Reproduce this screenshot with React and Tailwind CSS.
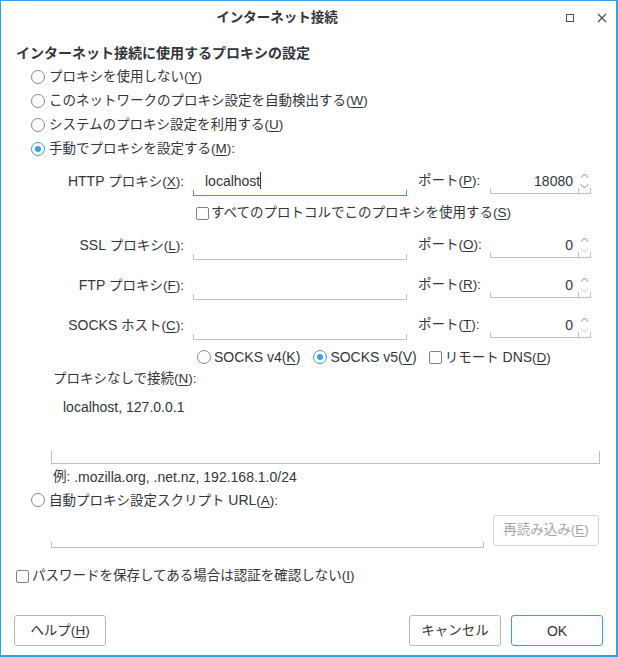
import React from "react";

const U = ({ children }) => (
  <span className="underline decoration-1 underline-offset-[2px]">{children}</span>
);

const Radio = ({ checked }) =>
  checked ? (
    <span className="w-[14px] h-[14px] rounded-full border-[1.5px] border-[#2ba4ec] flex items-center justify-center shrink-0 bg-white">
      <span className="w-[6px] h-[6px] rounded-full bg-[#2ba4ec]" />
    </span>
  ) : (
    <span className="block w-[14px] h-[14px] rounded-full border border-[#83888b] shrink-0 bg-white" />
  );

const Check = () => (
  <span className="block w-[13px] h-[13px] rounded-[2px] border border-[#7d8285] shrink-0 bg-white" />
);

const Field = ({ className, focused, tall, children }) => (
  <div
    className={
      "relative border-b flex items-center " +
      (focused ? "border-[#2ba4ec] " : "border-[#bcbec0] ") +
      className
    }
  >
    <span
      className={
        "absolute left-0 bottom-0 w-px " +
        (tall ? "h-[12px] " : "h-[5px] ") +
        (focused ? "bg-[#2ba4ec]" : "bg-[#bcbec0]")
      }
    />
    <span
      className={
        "absolute right-0 bottom-0 w-px " +
        (tall ? "h-[12px] " : "h-[5px] ") +
        (focused ? "bg-[#2ba4ec]" : "bg-[#bcbec0]")
      }
    />
    {children}
  </div>
);

const Chevron = ({ up, light }) => (
  <svg width="9" height="5" viewBox="0 0 9 5" className="block">
    <polyline
      points={up ? "1,4.5 4.5,1 8,4.5" : "1,0.5 4.5,4 8,0.5"}
      fill="none"
      stroke={light ? "#c4c6c8" : "#7a7f82"}
      strokeWidth="1"
    />
  </svg>
);

const Spin = ({ value, downLight }) => (
  <div className="relative w-[101px] h-[26px] border-b border-[#bcbec0] flex items-center">
    <span className="absolute left-0 bottom-0 w-px h-[5px] bg-[#bcbec0]" />
    <span className="flex-1 text-right pr-[5px] text-[14px]">{value}</span>
    <div className="relative w-[13px] h-full flex flex-col items-center pt-[5px] gap-[6px]">
      <span className="absolute left-0 bottom-0 w-px h-[5px] bg-[#bcbec0]" />
      <span className="absolute right-0 bottom-0 w-px h-[5px] bg-[#bcbec0]" />
      <Chevron up />
      <Chevron light={downLight} />
    </div>
  </div>
);

const ProxyRow = ({ label, port, portValue, focused, downLight, children }) => (
  <div className="h-[40px] flex items-center">
    <div className="w-[168px] text-right">{label}</div>
    <Field className="ml-[9px] w-[214px] h-[30px]" focused={focused}>
      {children}
    </Field>
    <div className="ml-[11px] w-[72px]">{port}</div>
    <Spin value={portValue} downLight={downLight} />
  </div>
);

const L = ({ children }) => <span className="text-[14px]">{children}</span>;

export default function App() {
  return (
    <div className="w-[618px] h-[657px] bg-white border-t border-l border-r-2 border-b-2 border-[#2ba4ec] flex flex-col text-[#31363b] text-[13.5px] leading-none font-['Liberation_Sans','Noto_Sans_CJK_JP',sans-serif] overflow-hidden">
      {/* Title bar */}
      <div className="h-[34px] flex items-center shrink-0">
        <div className="w-[552px] text-center font-bold">インターネット接続</div>
        <div className="ml-[13px] w-[8px] h-[8px] border-[1.5px] border-[#4d4d4d] -mt-[1px]" />
        <svg width="10" height="10" viewBox="0 0 10 10" className="ml-[23px] -mt-[1px]">
          <path d="M1 1 L9 9 M9 1 L1 9" stroke="#4d4d4d" strokeWidth="1.2" />
        </svg>
      </div>

      <div className="pl-[15px] flex flex-col">
        <div className="mt-[6px] h-[24px] flex items-center font-bold text-[14px]">
          インターネット接続に使用するプロキシの設定
        </div>

        {[
          ["プロキシを使用しない(", "Y", ")", false],
          ["このネットワークのプロキシ設定を自動検出する(", "W", ")", false],
          ["システムのプロキシ設定を利用する(", "U", ")", false],
          ["手動でプロキシを設定する(", "M", "):", true],
        ].map(([a, k, b, c]) => (
          <div key={k} className="h-[24px] flex items-center gap-[4px] ml-[15px]">
            <Radio checked={c} />
            <span>
              {a}
              <U>{k}</U>
              {b}
            </span>
          </div>
        ))}

        <ProxyRow
          label={<><L>HTTP</L> プロキシ(<U>X</U>):</>}
          port={<>ポート(<U>P</U>):</>}
          portValue="18080"
          focused
        >
          <span className="pl-[12px] text-[14px]">localhost</span>
          <span className="w-px h-[17px] bg-[#31363b]" />
        </ProxyRow>

        <div className="h-[24px] flex items-center gap-[2px] ml-[180px]">
          <Check />
          <span>
            すべてのプロトコルでこのプロキシを使用する(<U>S</U>)
          </span>
        </div>

        <ProxyRow
          label={<><L>SSL</L> プロキシ(<U>L</U>):</>}
          port={<>ポート(<U>O</U>):</>}
          portValue="0"
          downLight
        />
        <ProxyRow
          label={<><L>FTP</L> プロキシ(<U>F</U>):</>}
          port={<>ポート(<U>R</U>):</>}
          portValue="0"
          downLight
        />
        <ProxyRow
          label={<><L>SOCKS</L> ホスト(<U>C</U>):</>}
          port={<>ポート(<U>T</U>):</>}
          portValue="0"
          downLight
        />

        <div className="h-[24px] flex items-center ml-[181px]">
          <Radio />
          <span className="ml-[3px] text-[14px]">
            SOCKS v4(<U>K</U>)
          </span>
          <span className="ml-[13px] flex">
            <Radio checked />
          </span>
          <span className="ml-[3px] text-[14px]">
            SOCKS v5(<U>V</U>)
          </span>
          <span className="ml-[12px] flex">
            <Check />
          </span>
          <span className="ml-[3px]">
            リモート <L>DNS</L>(<U>D</U>)
          </span>
        </div>

        <div className="h-[20px] flex items-center ml-[37px]">
          プロキシなしで接続(<U>N</U>):
        </div>

        <Field className="ml-[35px] w-[549px] h-[75px] !items-start" tall>
          <span className="pl-[12px] pt-[10px] leading-[16px] text-[14px]">localhost, 127.0.0.1</span>
        </Field>

        <div className="h-[26px] flex items-center ml-[37px] whitespace-pre">
          例:<L> .mozilla.org, .net.nz, 192.168.1.0/24</L>
        </div>

        <div className="h-[20px] flex items-center gap-[4px] ml-[15px]">
          <Radio />
          <span>
            自動プロキシ設定スクリプト <L>URL</L>(<U>A</U>):
          </span>
        </div>

        <div className="h-[40px] flex items-center">
          <Field className="ml-[35px] w-[433px] h-[30px] self-end mb-[2px]" />
          <div className="ml-[9px] w-[106px] h-[31px] rounded-[3px] border border-[#d3d5d6] flex items-center justify-center text-[#a3a6a8]">
            再読み込み(<U>E</U>)
          </div>
        </div>

        <div className="mt-[14px] h-[24px] flex items-center gap-[3px]">
          <Check />
          <span>
            パスワードを保存してある場合は認証を確認しない(<U>I</U>)
          </span>
        </div>
      </div>

      <div className="mt-[27px] flex items-center px-[13px]">
        <div className="w-[92px] h-[31px] rounded-[3px] border border-[#b4b7b9] flex items-center justify-center">
          ヘルプ(<U>H</U>)
        </div>
        <div className="ml-auto w-[92px] h-[31px] rounded-[3px] border border-[#b4b7b9] flex items-center justify-center">
          キャンセル
        </div>
        <div className="ml-[10px] w-[92px] h-[31px] rounded-[3px] border border-[#2ba4ec] flex items-center justify-center text-[14px]">
          OK
        </div>
      </div>
    </div>
  );
}
